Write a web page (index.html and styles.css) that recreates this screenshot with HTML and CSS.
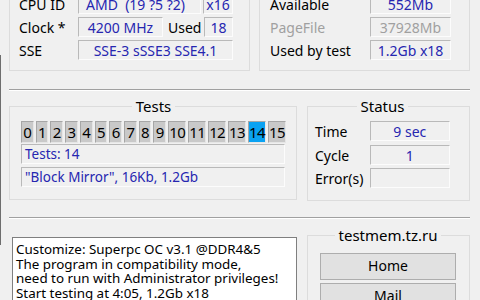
FILE: index.html
```html
<!doctype html>
<html lang="en">
 <head>
  <meta charset="UTF-8">
  <title>TestMem5</title>
  <link rel="stylesheet" href="styles.css">
 </head>
 <body>
  <div class="frame-edge"></div>
  <div class="window">
   <div class="top">
    <div class="box cpu-box">
     <div class="row"><span class="lbl">CPU ID</span><span class="fld fld-left w-cpu">AMD&nbsp; (19 ?5 ?2)</span><span class="fld w-thr">x16</span></div>
     <div class="row"><span class="lbl">Clock *</span><span class="fld w-clock">4200 MHz</span><span class="lbl lbl-used">Used</span><span class="fld w-used">18</span></div>
     <div class="row"><span class="lbl">SSE</span><span class="fld w-sse">SSE-3 sSSE3 SSE4.1</span></div>
    </div>
    <div class="box mem-box">
     <div class="row"><span class="lbl lbl-wide">Available</span><span class="fld w-mem">552Mb</span></div>
     <div class="row"><span class="lbl lbl-wide off">PageFile</span><span class="fld w-mem off">37928Mb</span></div>
     <div class="row"><span class="lbl lbl-wide">Used by test</span><span class="fld w-mem">1.2Gb x18</span></div>
    </div>
   </div>

   <div class="sep sep-top"></div>

   <div class="middle">
    <fieldset class="group tests">
     <legend>Tests</legend>
     <div class="cells">
      <span class="cell">0</span><span class="cell">1</span><span class="cell">2</span><span class="cell">3</span>
      <span class="cell">4</span><span class="cell">5</span><span class="cell">6</span><span class="cell">7</span>
      <span class="cell">8</span><span class="cell">9</span><span class="cell">10</span><span class="cell">11</span>
      <span class="cell">12</span><span class="cell">13</span><span class="cell active">14</span><span class="cell">15</span>
     </div>
     <div class="fld fld-line line">Tests: 14</div>
     <div class="fld fld-line line">"Block Mirror", 16Kb, 1.2Gb</div>
    </fieldset>
    <fieldset class="group status">
     <legend>Status</legend>
     <div class="row"><span class="lbl lbl-status">Time</span><span class="fld w-mem">9 sec</span></div>
     <div class="row"><span class="lbl lbl-status">Cycle</span><span class="fld w-mem">1</span></div>
     <div class="row"><span class="lbl lbl-status">Error(s)</span><span class="fld w-mem"></span></div>
    </fieldset>
   </div>

   <div class="sep sep-bottom"></div>

   <div class="bottom">
    <div class="memo">
     <p>Customize: Superpc OC v3.1 @DDR4&amp;5</p>
     <p>The program in compatibility mode,</p>
     <p>need to run with Administrator privileges!</p>
     <p>Start testing at 4:05, 1.2Gb x18</p>
     <p>Testing...</p>
    </div>
    <fieldset class="group links">
     <legend>testmem.tz.ru</legend>
     <button class="btn">Home</button>
     <button class="btn">Mail</button>
    </fieldset>
   </div>
  </div>
 </body>
</html>
```

FILE: styles.css
```css
* {
  box-sizing: border-box;
}

html, body {
  margin: 0;
  height: 100%;
  overflow: hidden;
}

body {
  background: #f0f0f0;
  color: #000;
  font-family: "Noto Sans", "Open Sans", sans-serif;
  font-size: 14px;
  position: relative;
}

.frame-edge {
  position: absolute;
  left: 0;
  top: 55px;
  width: 1px;
  height: 190px;
  background: #6e6e6e;
}

.window {
  margin-left: 9px;
  width: 461px;
}

.top {
  display: flex;
  gap: 9px;
  margin-top: -20px;
}

.box {
  border: 1px solid #dcdcdc;
  padding: 13px 0 10px;
  display: flex;
  flex-direction: column;
  gap: 3px;
}

.cpu-box {
  width: 241px;
  padding-left: 9px;
}

.mem-box {
  width: 211px;
  padding-left: 10px;
}

.row {
  display: flex;
  align-items: center;
  height: 20px;
}

.lbl {
  width: 59px;
  white-space: nowrap;
}

.lbl-used {
  width: 36px;
  margin-left: 5px;
}

.lbl-wide {
  width: 100px;
}

.lbl-status {
  width: 55px;
}

.off {
  color: #a0a0a0 !important;
}

.fld {
  height: 20px;
  border: 1px solid;
  border-color: #b9b9b9 #fcfcfc #fcfcfc #b9b9b9;
  display: flex;
  align-items: center;
  justify-content: center;
  color: #2626b0;
  white-space: nowrap;
  overflow: hidden;
}

.fld-left {
  justify-content: flex-start;
  padding-left: 7px;
}

.fld-line {
  justify-content: flex-start;
  padding-left: 3px;
}

.w-cpu { width: 123px; margin-right: 2px; }
.w-thr { width: 30px; }
.w-clock { width: 85px; }
.w-used { width: 29px; }
.w-sse { width: 155px; }
.w-mem { width: 81px; }

.sep {
  height: 2px;
  border-top: 1px solid #a0a0a0;
  border-bottom: 1px solid #fff;
}

.sep-top {
  margin-top: 18px;
}

.sep-bottom {
  margin-top: 16px;
}

/* group boxes */
.middle, .bottom {
  display: flex;
  gap: 10px;
  align-items: flex-start;
}

.middle {
  margin-top: 6px;
}

.bottom {
  margin-top: 7px;
}

.group {
  margin: 0;
  border: 1px solid #dcdcdc;
  min-width: 0;
}

.group legend {
  margin: 0 auto;
  padding: 0 4px;
  line-height: 18px;
  font-size: 15px;
}

.tests {
  width: 288px;
  padding: 6px 10px 12px 11px;
}

.status {
  width: 163px;
  padding: 6px 19px 12px 7px;
  display: flex;
  flex-direction: column;
  gap: 3px;
}

.status .row:first-of-type {
  margin-bottom: 1px;
}

.cells {
  display: grid;
  grid-template-columns: repeat(16, 1fr);
  gap: 2px;
  width: 265px;
  height: 19px;
  margin-bottom: 4px;
}

.cell {
  display: flex;
  align-items: center;
  justify-content: center;
  background: #c9c9c9;
  border: 1px solid;
  border-color: #a6a6a6 #e6e6e6 #e6e6e6 #a6a6a6;
  font-size: 15px;
  letter-spacing: -0.6px;
  overflow: visible;
}

.cell.active {
  background: #0aa2f2;
}

.line {
  width: 264px;
  margin-bottom: 3px;
  font-size: 13.5px;
}

.line:last-child {
  margin-bottom: 0;
}

/* log + links */
.memo {
  margin-left: 3px;
  margin-top: 11px;
  width: 285px;
  height: 120px;
  background: #fff;
  border: 1px solid #7f7f7f;
  padding: 4px 3px;
  font-size: 13.4px;
  overflow: hidden;
}

.memo p {
  margin: 0;
  line-height: 14.5px;
  white-space: nowrap;
}

.links {
  width: 163px;
  padding: 9px 13px 0 12px;
}

.btn {
  display: block;
  width: 136px;
  height: 27px;
  margin: 0 0 3px;
  background: #e1e1e1;
  border: 1px solid #adadad;
  font-family: inherit;
  font-size: 14px;
  color: #000;
  padding: 0 0 2px;
}
```
